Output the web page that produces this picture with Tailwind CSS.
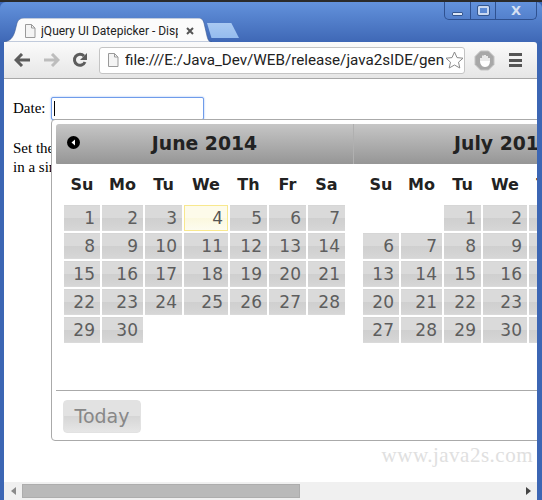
<!DOCTYPE html>
<html lang="en">
    <head>
        <title>jQuery UI Datepicker</title>
        <meta charset="UTF-8">
        <script src="https://cdn.jsdelivr.net/npm/@tailwindcss/browser@4"></script>
    </head>
    <body class="bg-white">
        <div class="w-[542px] h-[500px] overflow-hidden flex flex-col bg-[#3c66b4] border-t-2 border-[#2a2a2a]">
            <!-- title bar and tabs -->
            <div class="relative h-[40px] shrink-0 bg-linear-to-b from-[#6392dc] to-[#3f68b6] rounded-t-[6px]">
                <div class="absolute right-[5px] top-0 w-[93px] h-[18px] flex rounded-b-[5px] border border-t-0 border-[#2f5190]">
                    <div class="w-[26px] flex items-center justify-center border-r border-[#2f5190]"><div class="w-[11px] h-[4px] mt-[7px] bg-[#dfe8f6] border border-[#35578f] rounded-[1px]"></div></div>
                    <div class="w-[25px] flex items-center justify-center border-r border-[#2f5190]"><div class="w-[11px] h-[9px] border-2 border-[#c9d8f0] outline outline-[#35578f] rounded-[1px]"></div></div>
                    <div class="flex-1 flex items-center justify-center text-[13px] font-bold leading-none text-[#d5e0f2] font-['DejaVu_Sans',sans-serif]">X</div>
                </div>
                <div class="absolute left-[207px] top-[21px] w-[32px] h-[15px] bg-linear-to-b from-[#a9c9f2] to-[#95bcee] [clip-path:polygon(0_0,76%_0,100%_100%,14%_100%)]"></div>
                <svg class="absolute left-[4px] top-[16px]" width="208" height="24" viewBox="0 0 208 24">
                    <path d="M0 24 C6 23 9 20 11 13 L13 5 C14 2 16 0 20 0 H194 C198 0 199 2 200 5 L203 18 C204 22 205 24 208 24 Z" fill="#fbfbfb" stroke="#3a5a96" stroke-width="0.6"/>
                </svg>
                <div class="absolute left-[24px] top-[20px] w-[160px] h-[18px] flex items-center gap-[5px]">
                    <svg class="shrink-0" width="12" height="14" viewBox="0 0 12 14"><path d="M1.5 .5 H7.5 L11 4 V13.5 H1.5 Z" fill="#f4f4f4" stroke="#9a9a9a"/><path d="M7.5 .5 V4 H11" fill="none" stroke="#9a9a9a"/></svg>
                    <div class="w-[137px] shrink-0 overflow-hidden whitespace-nowrap text-[12px] leading-[18px] text-[#222] font-['Roboto',sans-serif]">jQuery UI Datepicker - Display</div>
                </div>
                <svg class="absolute left-[186px] top-[25px]" width="8" height="8" viewBox="0 0 8 8"><path d="M1 1 L7 7 M7 1 L1 7" stroke="#555" stroke-width="2"/></svg>
            </div>
            <!-- toolbar -->
            <div class="mx-[4px] w-[533px] h-[37px] shrink-0 flex items-center bg-linear-to-b from-[#fbfbfb] to-[#e6e6e6] border-b border-[#a8a8a8] rounded-tr-[3px]">
                <svg class="ml-[10px]" width="17" height="14" viewBox="0 0 17 14"><path d="M8 1 L2 7 L8 13 M2 7 H16" fill="none" stroke="#5c5c5c" stroke-width="3"/></svg>
                <svg class="ml-[12px]" width="17" height="14" viewBox="0 0 17 14"><path d="M9 1 L15 7 L9 13 M15 7 H1" fill="none" stroke="#bdbdbd" stroke-width="3"/></svg>
                <svg class="ml-[12px]" width="16" height="16" viewBox="0 0 16 16"><path d="M13 10 A5.5 5.5 0 1 1 12 4" fill="none" stroke="#5c5c5c" stroke-width="3"/><path d="M15 1 V8 H8 Z" fill="#5c5c5c"/></svg>
                <div class="ml-[11px] w-[366px] h-[27px] flex items-center bg-white border border-[#c4c4c4] rounded-[3px]">
                    <svg class="ml-[7px] shrink-0" width="12" height="14" viewBox="0 0 12 14"><path d="M1.5 .5 H7.5 L11 4 V13.5 H1.5 Z" fill="#f4f4f4" stroke="#9a9a9a"/><path d="M7.5 .5 V4 H11" fill="none" stroke="#9a9a9a"/></svg>
                    <div class="ml-[6px] w-[321px] overflow-hidden whitespace-nowrap text-[15.2px] text-[#222] font-['Roboto',sans-serif]">file:///E:/Java_Dev/WEB/release/java2sIDE/gen</div>
                    <svg class="shrink-0" width="19" height="18" viewBox="0 0 19 18"><path d="M9.5 1 L12 6.6 L18 7.2 L13.5 11.2 L14.8 17 L9.5 14 L4.2 17 L5.5 11.2 L1 7.2 L7 6.6 Z" fill="#fff" stroke="#8a8a8a"/></svg>
                </div>
                <svg class="ml-[9px]" width="21" height="21" viewBox="0 0 21 21"><path d="M6.5 1 H14.5 L20 6.5 V14.5 L14.5 20 H6.5 L1 14.5 V6.5 Z" fill="#a8a8a8" stroke="#c4c4c4"/><path d="M7 12 V8 M9 11 V5.5 M11 11 V5 M13 11 V6 M15 12 V8" fill="none" stroke="#fff" stroke-width="1.5"/><path d="M6.2 11 H15.8 V13 C15 16 13 17 11 17 C9 17 7.4 16 6.2 13 Z" fill="#fff"/></svg>
                <div class="ml-[14px] w-[13px] flex flex-col gap-[2.5px]">
                    <div class="h-[3px] bg-[#555]"></div>
                    <div class="h-[3px] bg-[#555]"></div>
                    <div class="h-[3px] bg-[#555]"></div>
                </div>
            </div>
            <!-- page -->
            <div class="mx-[4px] w-[533px] flex-1 relative overflow-hidden bg-white font-['Liberation_Serif',serif] text-[15px] leading-[19px] text-black">
                <div class="pl-[9px] pt-[18px] flex items-center h-[40px]">
                    <span>Date:</span>
                    <div class="ml-[6px] w-[153px] h-[23px] bg-white border border-[#6f9cea] rounded-[2px] shadow-[0_0_2px_#8fb4f4] flex items-center pl-[2px]"><div class="w-px h-[15px] bg-black"></div></div>
                </div>
                <p class="pl-[9px] pt-[20px] w-[300px]">Set the number of months to display<br>in a single datepicker</p>
                <!-- datepicker popup -->
                <div id="picker" class="absolute left-[47px] top-[40px] w-[620px] h-[322px] bg-white border border-[#aaa] rounded-[4px] p-[4px] font-['DejaVu_Sans',sans-serif]">
                    <div class="flex h-[40px] bg-linear-to-b from-[#c6c6c6] to-[#969696] rounded-t-[3px] rounded-b-[1px] text-[18.8px] font-bold text-[#222]">
                        <div class="relative w-[298px] border-r border-[#b0b0b0] flex items-center justify-center pb-[1px]">
                            <svg class="absolute left-[11px] top-[12px]" width="13" height="13" viewBox="0 0 13 13"><circle cx="6.5" cy="6.5" r="6.5" fill="#000"/><path d="M8 3.5 L4.5 6.5 L8 9.5 Z" fill="#fff"/></svg>
                            June 2014
                        </div>
                        <div class="w-[298px] flex items-center justify-center pb-[1px]">July 2014</div>
                    </div>
                    <div class="flex">
                        <div id="june" class="ml-[8px] w-[281px] shrink-0 grid grid-cols-[36px_41px_37px_44px_37px_37px_37px] grid-rows-[39px] gap-[2px] auto-rows-[26px]"></div>
                        <div id="july" class="ml-[18px] w-[281px] shrink-0 grid grid-cols-[36px_41px_37px_44px_37px_37px_37px] grid-rows-[39px] gap-[2px] auto-rows-[26px]"></div>
                    </div>
                    <div class="absolute left-[4px] right-[4px] top-[270px] border-t border-[#aaa]"></div>
                    <div class="absolute left-[11px] top-[280px] w-[78px] h-[33px] rounded-[4px] border border-[#e2e2e2] bg-[linear-gradient(#e2e2e2_0,#e2e2e2_50%,#d6d6d6_50%,#e6e6e6_100%)] text-[19px] leading-[31px] text-center text-[#888]">Today</div>
                </div>
                <div class="absolute right-[4px] bottom-[15px] text-[21px] leading-[24px] tracking-[0.5px] text-[#e0e0e0]">www.java2s.com</div>
            </div>
            <!-- scrollbar -->
            <div class="mx-[4px] w-[533px] h-[18px] shrink-0 flex items-center bg-[#f0f0f0]">
                <svg class="ml-[7px]" width="5" height="8" viewBox="0 0 5 8"><path d="M5 0 V8 L0 4 Z" fill="#8a8a8a"/></svg>
                <div class="ml-[6px] w-[278px] h-[14px] bg-[#b9b9b9] border border-[#adadad]"></div>
                <svg class="ml-[226px]" width="5" height="8" viewBox="0 0 5 8"><path d="M0 0 V8 L5 4 Z" fill="#444"/></svg>
            </div>
        </div>
        <script>
            var headClass = 'pt-[10px] text-center text-[16px] font-bold text-[#222] leading-[22px]'
            var cellClass = 'pr-[4px] text-right text-[17px] leading-[24px] text-[#5e5e5e] border border-transparent bg-[linear-gradient(#dadada_0,#dadada_50%,#cfcfcf_50%,#d6d6d6_100%)]'
            var todayClass = 'pr-[4px] text-right text-[17px] leading-[24px] text-[#555] border border-[#f8e88e] bg-[linear-gradient(#fdfbea_0,#fdfbea_50%,#fbf8de_50%,#fdfcf0_100%)]'
            var names = ['Su', 'Mo', 'Tu', 'We', 'Th', 'Fr', 'Sa']

            function fill(id, blanks, days, today) {
                var box = document.getElementById(id)
                var html = ''
                names.forEach((n) => { html += `<div class="${headClass}">${n}</div>` })
                for (var i = 0; i < blanks; i++) html += '<div></div>'
                for (var d = 1; d <= days; d++) {
                    html += `<div class="${d == today ? todayClass : cellClass}">${d}</div>`
                }
                box.innerHTML = html
            }
            fill('june', 0, 30, 4)
            fill('july', 2, 31, 0)
        </script>
    </body>
</html>
